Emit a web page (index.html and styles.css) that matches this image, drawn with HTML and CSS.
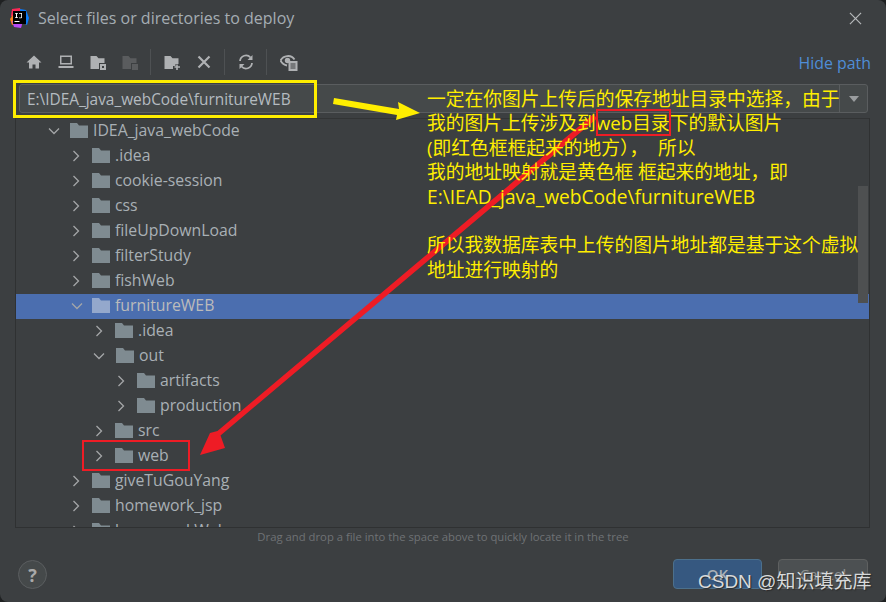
FILE: index.html
```html
<!DOCTYPE html>
<html lang="zh">
<head>
<meta charset="utf-8">
<title>Select files or directories to deploy</title>
<link rel="stylesheet" href="styles.css">
</head>
<body>
<div class="dialog">
  <header class="titlebar">
    <svg class="logo" viewBox="0 0 20 20" width="20" height="20">
      <path d="M3 1 L11 0 L12 4 L4 10 L2 8Z" fill="#fe2857"/>
      <path d="M1 11 L6 4 L7 16 L3 17Z" fill="#fc801d"/>
      <path d="M11 1 L17 2 L20 10 L18 17 L12 14Z" fill="#087cfa"/>
      <path d="M3 13 L14 13 L12 20 L5 19Z" fill="#b74af7"/>
      <rect x="4" y="3" width="13" height="13" fill="#000"/>
      <rect x="5.500" y="13" width="5" height="1" fill="#fff"/>
      <path d="M6 5h3v.8h-1v3.400h1v.8h-3v-.8h1V5.800H6zM10 5h3v4.200c0 .8-.6 1-1.200 1H10v-.8h1.800c.3 0 .4-.1.4-.4V5.800H10z" fill="#fff"/>
    </svg>
    <span class="title">Select files or directories to deploy</span>
    <svg class="close" viewBox="0 0 14 14" width="13" height="13"><path d="M1 1l12 12M13 1L1 13" stroke="#b4b7b9" stroke-width="1.300" fill="none"/></svg>
  </header>

  <div class="toolbar">
    <div class="tools">
      <svg class="tool" viewBox="0 0 16 16"><path d="M8 1.500 L0.500 8.500h2.500v6h3.500v-4h3v4H13v-6h2.500z" fill="#afb1b3"/></svg>
      <svg class="tool" viewBox="0 0 16 16"><path d="M2 1.500h12v9H2zM3.500 3v6h9V3z" fill="#afb1b3" fill-rule="evenodd"/><rect x="0.500" y="12" width="15" height="2" fill="#afb1b3"/></svg>
      <svg class="tool" viewBox="0 0 16 16"><path d="M0.500 2h6l2 2.200h6V9H9v6H0.500z" fill="#afb1b3"/><path d="M10 10h6v6h-6zM12 12v2h2v-2z" fill="#afb1b3" fill-rule="evenodd"/></svg>
      <svg class="tool" viewBox="0 0 16 16"><path d="M0.500 2h6l2 2.200h6V9H9v6H0.500z" fill="#5a5c5e"/><rect x="10" y="10" width="6" height="6" fill="#5a5c5e"/></svg>
      <span class="sep"></span>
      <svg class="tool" viewBox="0 0 16 16"><path d="M0.500 2h6l2 2.200h6V10h-3v2h-2.500v3H0.500z" fill="#afb1b3"/><path d="M13 10.500v5.500M10.500 13H16" stroke="#afb1b3" stroke-width="1.600"/></svg>
      <svg class="tool" viewBox="0 0 16 16"><path d="M2.500 2.500l11 11M13.500 2.500l-11 11" stroke="#afb1b3" stroke-width="2.200" fill="none"/></svg>
      <span class="sep"></span>
      <svg class="tool" viewBox="0 0 16 16"><path d="M2 7a6 6 0 0 1 10.500-3.500M14 9a6 6 0 0 1-10.500 3.500" stroke="#afb1b3" stroke-width="1.800" fill="none"/><path d="M14.500 1v5h-5zM1.500 15v-5h5z" fill="#afb1b3"/></svg>
      <span class="sep"></span>
      <svg class="tool tool-wide" viewBox="0 0 18 18"><path d="M0.500 7.500C3 2.500 11 1 14.500 6.500" stroke="#afb1b3" stroke-width="1.800" fill="none"/><path d="M0.500 7.500C2 10.500 4.500 12 7 12.500" stroke="#afb1b3" stroke-width="1.800" fill="none"/><circle cx="7.500" cy="7.500" r="2.700" fill="#afb1b3"/><rect x="8.500" y="8" width="9" height="10" fill="#afb1b3"/><path d="M10.500 11h5M10.500 13h5M10.500 15h5" stroke="#3c3f41"/></svg>
    </div>
    <a class="hide-path">Hide path</a>
  </div>

  <div class="pathbar">
    <span class="path-value">E:\IDEA_java_webCode\furnitureWEB</span>
    <span class="path-drop"><svg viewBox="0 0 10 6" width="10" height="6"><path d="M0 0h10L5 6z" fill="#9a9d9f"/></svg></span>
  </div>

  <div class="tree">
    <div class="row lv0 open"><svg class="chev"><use href="#down"/></svg><svg class="folder"><use href="#fold"/></svg><span>IDEA_java_webCode</span></div>
    <div class="row lv1"><svg class="chev"><use href="#right"/></svg><svg class="folder"><use href="#fold"/></svg><span>.idea</span></div>
    <div class="row lv1"><svg class="chev"><use href="#right"/></svg><svg class="folder"><use href="#fold"/></svg><span>cookie-session</span></div>
    <div class="row lv1"><svg class="chev"><use href="#right"/></svg><svg class="folder"><use href="#fold"/></svg><span>css</span></div>
    <div class="row lv1"><svg class="chev"><use href="#right"/></svg><svg class="folder"><use href="#fold"/></svg><span>fileUpDownLoad</span></div>
    <div class="row lv1"><svg class="chev"><use href="#right"/></svg><svg class="folder"><use href="#fold"/></svg><span>filterStudy</span></div>
    <div class="row lv1"><svg class="chev"><use href="#right"/></svg><svg class="folder"><use href="#fold"/></svg><span>fishWeb</span></div>
    <div class="row lv1 open selected"><svg class="chev"><use href="#down"/></svg><svg class="folder"><use href="#fold"/></svg><span>furnitureWEB</span></div>
    <div class="row lv2"><svg class="chev"><use href="#right"/></svg><svg class="folder"><use href="#fold"/></svg><span>.idea</span></div>
    <div class="row lv2 open"><svg class="chev"><use href="#down"/></svg><svg class="folder"><use href="#fold"/></svg><span>out</span></div>
    <div class="row lv3"><svg class="chev"><use href="#right"/></svg><svg class="folder"><use href="#fold"/></svg><span>artifacts</span></div>
    <div class="row lv3"><svg class="chev"><use href="#right"/></svg><svg class="folder"><use href="#fold"/></svg><span>production</span></div>
    <div class="row lv2"><svg class="chev"><use href="#right"/></svg><svg class="folder"><use href="#fold"/></svg><span>src</span></div>
    <div class="row lv2"><svg class="chev"><use href="#right"/></svg><svg class="folder"><use href="#fold"/></svg><span>web</span></div>
    <div class="row lv1"><svg class="chev"><use href="#right"/></svg><svg class="folder"><use href="#fold"/></svg><span>giveTuGouYang</span></div>
    <div class="row lv1"><svg class="chev"><use href="#right"/></svg><svg class="folder"><use href="#fold"/></svg><span>homework_jsp</span></div>
    <div class="row lv1"><svg class="chev"><use href="#right"/></svg><svg class="folder"><use href="#fold"/></svg><span>homeworkWeb</span></div>
    <div class="scrollbar"></div>
  </div>

  <p class="hint">Drag and drop a file into the space above to quickly locate it in the tree</p>

  <footer class="footer">
    <span class="help">?</span>
    <div class="buttons">
      <button class="btn primary">OK</button>
      <button class="btn">Cancel</button>
    </div>
  </footer>

  <svg class="arrows" viewBox="0 0 886 602" width="886" height="602">
    <path d="M334 98 L399 109 L398 102 L420 113 L396 120 L397 115 L333 104Z" fill="#ffee00"/>
    <path d="M593.500 114 L597 118.500 L220.500 435.500 L225 448 L200 455 L210 433 L217.500 431Z" fill="#ee1c25"/>
  </svg>
  <div class="note">一定在你图片上传后的保存地址目录中选择，由于<br>我的图片上传涉及到web目录下的默认图片<br>(即红色框框起来的地方）， &nbsp;所以<br>我的地址映射就是黄色框 框起来的地址，即<br><span class="note-latin">E:\IEAD_java_webCode\furnitureWEB</span><br><br>所以我数据库表中上传的图片地址都是基于这个虚拟<br>地址进行映射的</div>
  <div class="box box-yellow"></div>
  <div class="box box-red-web"></div>
  <div class="box box-red-text"></div>
  <span class="watermark">CSDN @知识填充库</span>
</div>

<svg class="defs" width="0" height="0">
  <defs>
    <symbol id="right" viewBox="0 0 8 12"><path d="M1.500 1l5 5-5 5" stroke="#a4a6a8" stroke-width="1.300" fill="none"/></symbol>
    <symbol id="down" viewBox="0 0 12 8"><path d="M1 1.500l5 5 5-5" stroke="#a4a6a8" stroke-width="1.300" fill="none"/></symbol>
    <symbol id="fold" viewBox="0 0 18 15"><path d="M0 0h7l2 2.500h9V15H0z" fill="currentColor"/></symbol>
  </defs>
</svg>
</body>
</html>
```

FILE: styles.css
```css
* { box-sizing: border-box; }
html, body { margin: 0; padding: 0; background: #1f2122; }
body { width: 886px; height: 602px; overflow: hidden; font-family: "Open Sans", "Noto Sans CJK SC", sans-serif; }
.defs { position: absolute; }
.dialog {
  position: relative;
  width: 886px; height: 602px;
  background: #3c3f41;
  border-radius: 8px;
  display: flex; flex-direction: column;
  overflow: hidden;
  color: #a9b0b5;
}
.titlebar { height: 39px; display: flex; align-items: center; padding: 0 24px 3px 9px; flex: none; }
.logo { flex: none; }
.title { margin-left: 9px; font-size: 16px; color: #a5adb3; flex: 1; }
.close { flex: none; }
.toolbar { height: 45px; display: flex; align-items: center; justify-content: space-between; padding: 1px 15px 0 26px; flex: none; }
.tools { display: flex; align-items: center; gap: 16px; }
.tool { width: 16px; height: 16px; flex: none; }
.tool-wide { width: 18px; height: 18px; }
.sep { width: 1px; height: 26px; background: #4e5153; margin: 0 -3px 0 -4px; }
.hide-path { color: #4f8dd6; font-size: 15.900px; margin-top: 1px; }
.pathbar {
  height: 29px; margin: 0 18px 0 19px; flex: none;
  display: flex; align-items: center; justify-content: space-between;
  background: #45494a; border: 1px solid #5a5d5f; border-radius: 3px;
}
.path-value { padding-left: 7px; padding-top: 1px; font-size: 15.400px; color: #b4bbc0; }
.path-drop { width: 28px; height: 100%; border-left: 1px solid #5a5d5f; display: flex; align-items: center; justify-content: center; }
.tree {
  position: relative;
  margin: 5px 16px 0 15px;
  height: 410px; flex: none;
  border: 1px solid #2f3132;
  border-top: 1px solid #323435;
  overflow: hidden;
}
.row { height: 25px; padding-bottom: 2px; display: flex; align-items: center; font-size: 15.800px; white-space: nowrap; color: #a9b0b5; }
.row span { margin-bottom: 2px; }
.row .chev { flex: none; width: 8px; height: 12px; margin-right: 12px; }
.row .folder { width: 18px; height: 15px; color: #7f8b91; margin-right: 5px; flex: none; }
.lv0 .chev { margin-left: 32px; }
.lv1 .chev { margin-left: 56px; }
.lv2 .chev { margin-left: 79px; }
.lv3 .chev { margin-left: 101px; }
.row.open .chev { width: 12px; height: 8px; margin-right: 9px; }
.lv0.open .chev { margin-right: 10px; }
.lv1.open .chev { margin-left: 55px; }
.lv2.open .chev { margin-left: 77px; margin-right: 11px; }
.row.selected { background: #4b6eaf; color: #bbbbbb; }
.row.selected .folder { color: #94a8cc; }
.scrollbar { position: absolute; right: 1px; top: 67px; width: 10px; height: 117px; background: #4e5051; }
.hint { margin: 1px 0 0; text-align: center; font-size: 11.300px; color: #6f7275; flex: none; }
.footer { flex: 1; display: flex; align-items: flex-start; justify-content: space-between; padding: 15px 18px 0 18px; }
.help {
  width: 29px; height: 29px; border-radius: 50%;
  border: 1px solid #5b5e60; background: #45494a; color: #a9a9a9;
  display: flex; align-items: center; justify-content: center;
  font-size: 18px; font-weight: 700; margin-top: 1px;
}
.buttons { display: flex; gap: 16px; }
.btn {
  width: 90px; height: 30px; border-radius: 4px; border: 1px solid #5e6060;
  background: #4c5052; color: #8d9091; font: 15px "Open Sans", sans-serif; padding: 0;
}
.btn.primary { width: 89px; background: #365880; border-color: #4c708c; color: #a9b0b5; font-weight: 600; }
.note {
  position: absolute; left: 427px; top: 87px;
  font: 18.750px/24.400px "Open Sans", "Noto Sans CJK SC", sans-serif;
  color: #ffee00; white-space: nowrap;
}
.note-latin { font-size: 19.170px; }
.box { position: absolute; border-style: solid; }
.box-yellow { left: 13px; top: 80px; width: 304px; height: 38px; border: 3px solid #ffee00; }
.box-red-web { left: 82px; top: 440px; width: 108px; height: 31px; border: 2px solid #ee1c25; }
.box-red-text { left: 596px; top: 109px; width: 75px; height: 27px; border: 2px solid #ee1c25; }
.arrows { position: absolute; left: 0; top: 0; }
.watermark {
  position: absolute; left: 698px; top: 566px;
  font: 19px "Liberation Sans", "Noto Sans CJK SC", sans-serif;
  color: #d8dadb; text-shadow: 1px 1px 1px #2a2a2a; white-space: nowrap;
}
```
